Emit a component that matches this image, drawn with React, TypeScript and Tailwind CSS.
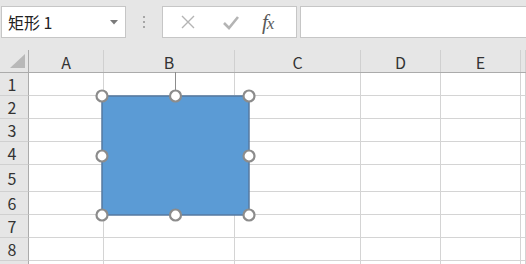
import React from "react";

const cols = [
  { label: "", w: "w-[29px]" },
  { label: "A", w: "w-[75px]" },
  { label: "B", w: "w-[131px]" },
  { label: "C", w: "w-[126px]" },
  { label: "D", w: "w-[80px]" },
  { label: "E", w: "w-[80px]" },
  { label: "", w: "flex-1" },
];

// row 9 only peeks in at the bottom edge, so its number stays out of view
const rows = [
  { n: "1", h: "h-[23px]" },
  { n: "2", h: "h-[23px]" },
  { n: "3", h: "h-[23px]" },
  { n: "4", h: "h-[23px]" },
  { n: "5", h: "h-[27px]" },
  { n: "6", h: "h-[23px]" },
  { n: "7", h: "h-[23px]" },
  { n: "8", h: "h-[23px]" },
  { n: "", h: "h-[23px]" },
];

const font = { fontFamily: '"Noto Sans CJK SC", "Noto Sans", sans-serif' };

function Handle({ cx, cy }: { cx: number; cy: number }) {
  return <circle cx={cx} cy={cy} r={5.5} fill="#fff" stroke="#8c8c8c" strokeWidth={2.2} />;
}

export default function App() {
  return (
    <div className="w-[526px] h-[264px] overflow-hidden bg-[#e6e6e6]" style={font}>
      {/* Formula bar */}
      <div className="h-[50px] flex items-start pt-[6px] pl-[1px]">
        <div className="w-[125px] h-[32px] bg-white border border-[#c6c6c6] flex items-center pl-[6px] pr-[6px]">
          <span className="text-[16px] text-[#222] leading-none flex-1">矩形 1</span>
          <svg width="8" height="5" viewBox="0 0 8 5" className="mr-[1px]">
            <path d="M0 0 L8 0 L4 4.5 Z" fill="#7a7a7a" />
          </svg>
        </div>
        <div className="w-[36px] h-[32px] flex flex-col items-center justify-center gap-[3px]">
          <span className="w-[2px] h-[2px] bg-[#a6a6a6]" />
          <span className="w-[2px] h-[2px] bg-[#a6a6a6]" />
          <span className="w-[2px] h-[2px] bg-[#a6a6a6]" />
        </div>
        <div className="w-[135px] h-[32px] bg-white border border-[#c6c6c6] flex items-center">
          <svg width="16" height="16" viewBox="0 0 16 16" className="ml-[17px]">
            <path d="M2 2 L14 14 M14 2 L2 14" stroke="#b4b4b4" strokeWidth="1.4" fill="none" />
          </svg>
          <svg width="18" height="16" viewBox="0 0 18 16" className="ml-[26px]">
            <path d="M2 9 L7 14 L16 3" stroke="#b4b4b4" strokeWidth="2.6" fill="none" />
          </svg>
          <span
            className="ml-[22px] text-[21px] italic text-[#5a5a5a] leading-none tracking-[-1px]"
            style={{ fontFamily: '"Liberation Serif", serif' }}
          >
            f<span className="text-[17px]">x</span>
          </span>
        </div>
        <div className="ml-[3px] flex-1 h-[32px] bg-white border border-[#c6c6c6] border-r-0" />
      </div>

      {/* Sheet */}
      <div className="relative">
        <div className="flex h-[23px] border-b border-[#ababab]">
          {cols.map((c, i) => (
            <div
              key={i}
              className={`${c.w} shrink-0 flex items-center justify-center text-[16px] text-[#333] ${
                i === 0 ? "border-r border-[#ababab] relative" : "border-r border-[#d0d0d0]"
              }`}
            >
              {i === 0 ? (
                <svg width="29" height="22" viewBox="0 0 29 22" className="absolute inset-0">
                  <path d="M10 18 L25 4 L25 18 Z" fill="#b8b8b8" />
                </svg>
              ) : (
                <span className="leading-none pt-[1px]">{c.label}</span>
              )}
            </div>
          ))}
        </div>
        {rows.map((r, ri) => (
          <div key={ri} className={`flex ${r.h} bg-white`}>
            {cols.map((c, i) =>
              i === 0 ? (
                <div
                  key={i}
                  className="w-[29px] shrink-0 bg-[#e6e6e6] border-r border-b border-r-[#ababab] border-b-[#d0d0d0] flex items-center justify-center text-[16px] text-[#333]"
                >
                  <span className="leading-none pr-[4px]">{r.n}</span>
                </div>
              ) : (
                <div key={i} className={`${c.w} shrink-0 border-r border-b border-[#d4d4d4]`} />
              )
            )}
          </div>
        ))}

        {/* Selected shape */}
        <svg width="526" height="214" className="absolute left-0 top-0 pointer-events-none">
          <line x1="175.5" y1="22" x2="175.5" y2="41" stroke="#8c8c8c" strokeWidth="1" />
          <rect x="102" y="46" width="147" height="119" fill="#5b9bd5" stroke="#5679a0" strokeWidth="1.5" />
          <Handle cx={102} cy={46} />
          <Handle cx={175.5} cy={46} />
          <Handle cx={249} cy={46} />
          <Handle cx={102} cy={106} />
          <Handle cx={249} cy={106} />
          <Handle cx={102} cy={165} />
          <Handle cx={175.5} cy={165} />
          <Handle cx={249} cy={165} />
        </svg>
      </div>
    </div>
  );
}
